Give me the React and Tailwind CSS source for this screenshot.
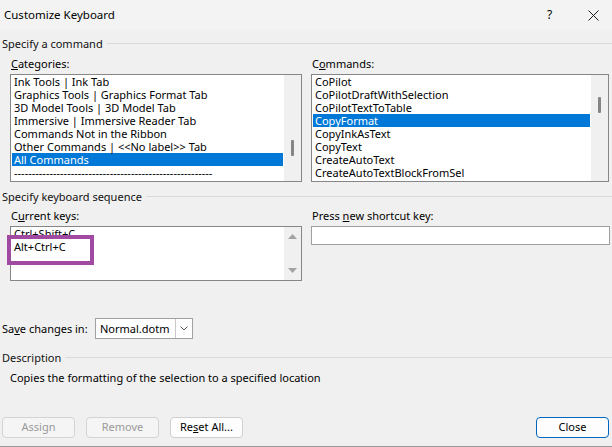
import React from "react";

const font = { fontFamily: '"Noto Sans", "Open Sans", sans-serif' };

function Row({ children, selected }) {
  return (
    <div
      className={
        "h-[13px] leading-[13px] mx-[1px] pl-[2px] whitespace-nowrap " +
        (selected ? "bg-[#0078d7] text-white" : "text-black")
      }
    >
      {children}
    </div>
  );
}

function GroupHeader({ children }) {
  return (
    <div className="h-[14px] flex items-center pl-[2px]">
      <span className="leading-[14px] text-[#111]">{children}</span>
      <div className="flex-1 h-px bg-[#dadada] ml-[4px] mt-[-1px]" />
    </div>
  );
}

export default function App() {
  const categories = [
    "Ink Tools | Ink Tab",
    "Graphics Tools | Graphics Format Tab",
    "3D Model Tools | 3D Model Tab",
    "Immersive | Immersive Reader Tab",
    "Commands Not in the Ribbon",
    "Other Commands | <<No label>> Tab",
    "All Commands",
    "--------------------------------------------------------",
  ];
  const commands = [
    "CoPilot",
    "CoPilotDraftWithSelection",
    "CoPilotTextToTable",
    "CopyFormat",
    "CopyInkAsText",
    "CopyText",
    "CreateAutoText",
    "CreateAutoTextBlockFromSel",
  ];

  return (
    <div
      className="w-[612px] h-[447px] bg-[#f0f0f0] overflow-hidden text-[11px] text-black flex flex-col"
      style={font}
    >
      {/* Title bar */}
      <div className="h-[30px] bg-[#f3f3f3] flex items-center shrink-0">
        <span className="pl-[4px] text-[11.5px] text-black">Customize Keyboard</span>
        <div className="ml-auto flex items-center h-full">
          <div className="w-[49px] flex items-center justify-center text-[12px] text-black">?</div>
          <div className="w-[38px] flex items-center justify-center">
            <svg width="11" height="11" viewBox="0 0 11 11">
              <path d="M0.5 0.5 L10.5 10.5 M10.5 0.5 L0.5 10.5" stroke="#1a1a1a" strokeWidth="1" fill="none" />
            </svg>
          </div>
        </div>
      </div>

      {/* Specify a command */}
      <div className="mt-[7px]">
        <GroupHeader>Specify a command</GroupHeader>
      </div>

      <div className="mt-[6px] flex">
        <div className="ml-[10px] w-[292px] flex flex-col">
          <div className="h-[14px] leading-[14px] pl-[1px]">
            <span className="underline">C</span>ategories:
          </div>
          <div className="mt-[3px] h-[108px] border border-[#868686] flex">
            <div className="flex-1 bg-white overflow-hidden">
              {categories.map((c, i) => (
                <Row key={i} selected={c === "All Commands"}>
                  {c}
                </Row>
              ))}
            </div>
            <div className="w-[17px] bg-[#f0f0f0] relative">
              <div className="absolute left-[7px] top-[65px] w-[3px] h-[16px] bg-[#858585] rounded-[1px]" />
            </div>
          </div>
        </div>

        <div className="ml-[9px] w-[298px] flex flex-col">
          <div className="h-[14px] leading-[14px] pl-[1px]">
            C<span className="underline">o</span>mmands:
          </div>
          <div className="mt-[3px] h-[108px] border border-[#868686] flex">
            <div className="flex-1 bg-white overflow-hidden">
              {commands.map((c, i) => (
                <Row key={i} selected={c === "CopyFormat"}>
                  {c}
                </Row>
              ))}
            </div>
            <div className="w-[17px] bg-[#f0f0f0] relative">
              <div className="absolute left-[7px] top-[22px] w-[3px] h-[16px] bg-[#858585] rounded-[1px]" />
            </div>
          </div>
        </div>
      </div>

      {/* Specify keyboard sequence */}
      <div className="mt-[8px]">
        <GroupHeader>Specify keyboard sequence</GroupHeader>
      </div>

      <div className="mt-[5px] flex">
        <div className="ml-[10px] w-[292px] flex flex-col">
          <div className="h-[14px] leading-[14px] pl-[1px]">
            C<span className="underline">u</span>rrent keys:
          </div>
          <div className="mt-[3px] h-[55px] border border-[#868686] flex relative">
            <div className="flex-1 bg-white overflow-hidden">
              <Row>Ctrl+Shift+C</Row>
              <Row>Alt+Ctrl+C</Row>
            </div>
            <div className="w-[17px] bg-[#f0f0f0] flex flex-col items-center justify-between pt-[7px] pb-[7px]">
              <svg width="9" height="5" viewBox="0 0 9 5">
                <path d="M0 5 L4.5 0 L9 5 Z" fill="#a3a3a3" />
              </svg>
              <svg width="9" height="5" viewBox="0 0 9 5">
                <path d="M0 0 L9 0 L4.5 5 Z" fill="#a3a3a3" />
              </svg>
            </div>
            <div className="absolute left-[-4px] top-[8px] w-[87px] h-[30px] border-[4px] border-[#a04aa2]" />
          </div>
        </div>

        <div className="ml-[9px] w-[299px] flex flex-col">
          <div className="h-[14px] leading-[14px] pl-[1px]">
            Press <span className="underline">n</span>ew shortcut key:
          </div>
          <div className="mt-[3px] h-[19px] border border-[#a0a0a0] bg-white" />
        </div>
      </div>

      {/* Save changes in */}
      <div className="mt-[37px] flex items-center h-[21px]">
        <div className="w-[95px] pl-[2px] leading-[14px]">
          Sa<span className="underline">v</span>e changes in:
        </div>
        <div className="w-[98px] h-[21px] border border-[#a0a0a0] bg-white flex">
          <div className="flex-1 pl-[4px] leading-[19px]">Normal.dotm</div>
          <div className="w-[17px] border-l border-[#c8c8c8] flex items-center justify-center">
            <svg width="8" height="5" viewBox="0 0 8 5">
              <path d="M0.5 0.5 L4 4 L7.5 0.5" stroke="#555" strokeWidth="1" fill="none" />
            </svg>
          </div>
        </div>
      </div>

      {/* Description */}
      <div className="mt-[12px]">
        <GroupHeader>Description</GroupHeader>
      </div>
      <div className="mt-[6px] h-[14px] leading-[14px] pl-[10px]">
        Copies the formatting of the selection to a specified location
      </div>

      {/* Buttons */}
      <div className="mt-[32px] flex h-[21px] pl-[2px] pr-[3px]">
        <div className="w-[73px] h-[21px] rounded-[4px] border border-[#d4d4d4] bg-[#f5f5f5] text-[#9a9a9a] flex items-center justify-center">
          Assign
        </div>
        <div className="ml-[11px] w-[73px] h-[21px] rounded-[4px] border border-[#d4d4d4] bg-[#f5f5f5] text-[#9a9a9a] flex items-center justify-center">
          Remove
        </div>
        <div className="ml-[11px] w-[73px] h-[21px] rounded-[4px] border border-[#cfcfcf] bg-[#fdfdfd] text-black flex items-center justify-center">
          <span>
            Re<span className="underline">s</span>et All...
          </span>
        </div>
        <div className="ml-auto w-[73px] h-[21px] rounded-[4px] border border-[#0067c0] bg-[#fdfdfd] text-black flex items-center justify-center">
          Close
        </div>
      </div>

      <div className="mt-[8px] h-px bg-[#9a9a9a]" />
    </div>
  );
}
